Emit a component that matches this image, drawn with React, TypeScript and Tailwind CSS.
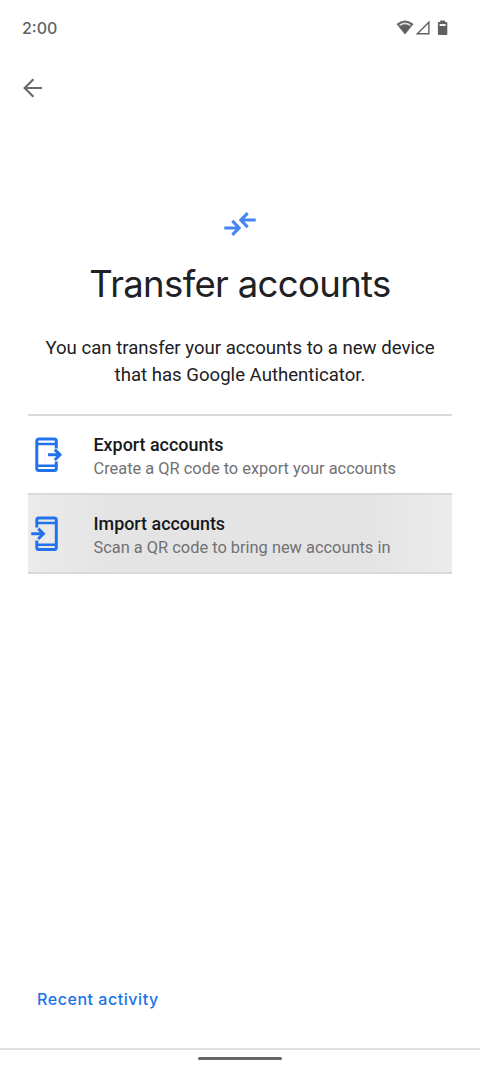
import React from "react";

function StatusIcons() {
  return (
    <svg width="54" height="18" viewBox="0 0 54 18" fill="#5f6062">
      <path d="M0.5 5Q9 -2.2 17.5 5L9 15.5Z" />
      <path d="M3 5.9Q9 1.3 15 5.9L14 7.1Q9 3.6 4 7.1Z" fill="#dcdcdc" />
      <path d="M21.3 14.8H32.9V3.2Z" fill="none" stroke="#5f6062" strokeWidth="1.4" />
      <path d="M44.2 1.4h4.8v1.7h1.3q1 0 1 1v10.8q0 1-1 1h-7.4q-1 0-1-1V4.1q0-1 1-1h1.3Z" />
      <path d="M43.6 5h6v2h-6Z" fill="#f4f4f4" />
    </svg>
  );
}

function BackIcon() {
  return (
    <svg width="20" height="20" viewBox="0 0 20 20" fill="none" stroke="#6b6b6b" strokeWidth="2.2">
      <path d="M19 10H2M10.4 1.3L1.7 10l8.7 8.7" />
    </svg>
  );
}

function TransferIcon() {
  return (
    <svg width="32" height="24" viewBox="0 0 32 24" fill="none" stroke="#4285f4" strokeWidth="3">
      <path d="M0.3 15.9H14.5M8.3 8.9L15.2 15.9L8.3 22.9" />
      <path d="M31.7 8.1H17.5M23.7 1.1L16.8 8.1L23.7 15.1" />
    </svg>
  );
}

function ExportIcon() {
  return (
    <svg width="32" height="36" viewBox="0 0 32 36" fill="none" stroke="#2272ed" strokeWidth="3">
      <path d="M24.3 11.5V4a2 2 0 0 0-2-2H6.8a2 2 0 0 0-2 2v27.6a2 2 0 0 0 2 2H22.3a2 2 0 0 0 2-2V24.5" />
      <path d="M5 6.9H24.3M5 28.7H24.3" strokeWidth="2.5" />
      <path d="M16 17.8H28M22.8 12.6L28 17.8l-5.2 5.2" />
    </svg>
  );
}

function ImportIcon() {
  return (
    <svg width="32" height="36" viewBox="0 0 32 36" fill="none" stroke="#2272ed" strokeWidth="3" className="overflow-visible">
      <path d="M4.8 11.5V4a2 2 0 0 1 2-2H22.3a2 2 0 0 1 2 2v27.6a2 2 0 0 1-2 2H6.8a2 2 0 0 1-2-2V24.5" />
      <path d="M5 6.9H24.3M5 28.7H24.3" strokeWidth="2.5" />
      <path d="M-0.8 17.8H11M6.2 12.6L11.4 17.8 6.2 23" />
    </svg>
  );
}

type RowProps = { icon: React.ReactNode; title: string; detail: string; active?: boolean };

function ActionRow({ icon, title, detail, active }: RowProps) {
  return (
    <button
      className={
        active
          ? "flex h-[79px] w-full items-center border-b-2 border-[#d8d8dd] bg-[linear-gradient(90deg,#ebebeb_0%,#e4e4e4_20%,#e4e4e4_80%,#ececec_100%)] text-left"
          : "flex h-[79px] w-full items-center border-b-2 border-[#d8d8dd] text-left"
      }
    >
      <span className="flex w-[65.5px] shrink-0 pl-1">
        {icon}
      </span>
      <span className="flex flex-col pt-[5px] whitespace-nowrap">
        <span className="text-[17.9px] leading-6 font-medium text-[#17181b]">{title}</span>
        <span className="text-[16.4px] leading-6 text-[#717174]">{detail}</span>
      </span>
    </button>
  );
}

export default function App() {
  return (
    <main className="flex h-[1067px] w-[480px] flex-col overflow-hidden bg-white font-['Roboto',sans-serif]">
      <header className="flex h-14 shrink-0 items-center justify-between pr-[30px] pl-[22px]">
        <span className="font-['Inter',sans-serif] text-[16px] font-medium text-[#626365]">2:00</span>
        <StatusIcons />
      </header>
      <nav className="flex h-16 shrink-0 items-center pl-[23px]">
        <button aria-label="Back">
          <BackIcon />
        </button>
      </nav>
      <section className="flex flex-col items-center pt-[92px]">
        <TransferIcon />
        <h1 className="mt-6 font-['Inter',sans-serif] text-[36.5px] leading-[48px] font-normal tracking-[-0.65px] whitespace-nowrap text-[#202124]">
          Transfer accounts
        </h1>
        <p className="mt-[27px] text-center text-[18.6px] leading-[26.5px] whitespace-nowrap text-[#202124]">
          You can transfer your accounts to a new device
          <br />
          that has Google Authenticator.
        </p>
      </section>
      <section className="mx-7 mt-[26px] border-t-2 border-[#dadadc]">
        <ActionRow icon={<ExportIcon />} title="Export accounts" detail="Create a QR code to export your accounts" />
        <ActionRow icon={<ImportIcon />} title="Import accounts" detail="Scan a QR code to bring new accounts in" active />
      </section>
      <footer className="mt-auto flex h-[81px] shrink-0 flex-col">
        <button className="ml-[37px] h-[25px] self-start font-['Inter',sans-serif] text-[16px] leading-6 font-medium tracking-[0.55px] text-[#1a73e8]">
          Recent activity
        </button>
        <div className="mt-[37px] flex justify-center border-t-2 border-[#dfe0e4] pt-[7px]">
          <div className="h-[3px] w-[84px] rounded-full bg-[#656565]" />
        </div>
      </footer>
    </main>
  );
}
